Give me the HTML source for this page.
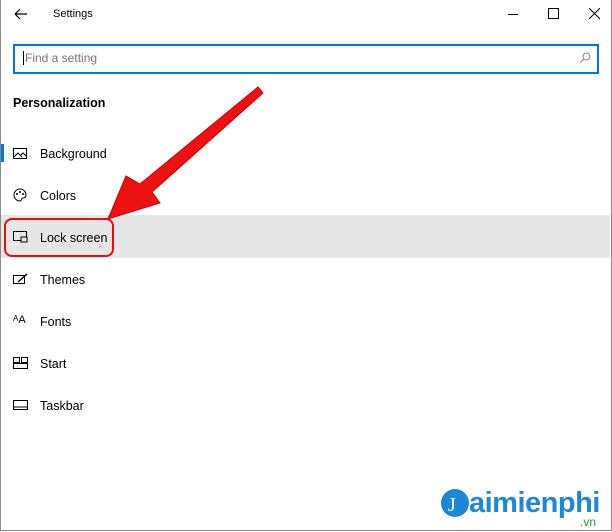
<!DOCTYPE html>
<html><head><style>
body{margin:0;width:612px;height:532px;background:#fff;font-family:"Liberation Sans",sans-serif;position:relative;overflow:hidden}
.frame{position:absolute;left:0;top:0;width:610px;height:530px;border:1px solid #8a8a8a;border-top:none}
.t{position:absolute;font-size:12px;color:#000}
.item{position:absolute;left:40px;font-size:12.5px;color:#000}
.ic{position:absolute;left:13px}
</style></head><body>
<div class="frame"></div>
<svg style="position:absolute;left:14px;top:8px" width="14" height="12"><path d="M1 6H13M1 6L6 1M1 6L6 11" stroke="#000" stroke-width="1.2" fill="none"/></svg>
<div class="t" style="left:53px;top:8px;font-size:11px">Settings</div>
<div style="position:absolute;left:508px;top:14px;width:10px;height:1px;background:#000"></div>
<div style="position:absolute;left:548px;top:8px;width:9px;height:9px;border:1px solid #000"></div>
<svg style="position:absolute;left:589px;top:8px" width="11" height="11"><path d="M0 0L11 11M11 0L0 11" stroke="#000" stroke-width="1"/></svg>
<div style="position:absolute;left:13px;top:44px;width:582px;height:26px;border:2px solid #0078d7"></div>
<div style="position:absolute;left:23px;top:51px;width:1px;height:14px;background:#000"></div>
<div class="t" style="left:25px;top:51px;color:#777;font-size:12px">Find a setting</div>
<svg style="position:absolute;left:579px;top:52px" width="12" height="12"><circle cx="7.5" cy="4.5" r="3.5" stroke="#888" fill="none"/><path d="M5 7L1 11" stroke="#888"/></svg>
<div class="t" style="left:13px;top:96px;font-weight:bold;font-size:12.5px">Personalization</div>
<div style="position:absolute;left:1px;top:144px;width:3px;height:18px;background:#0078d7"></div>
<div style="position:absolute;left:1px;top:215px;width:609px;height:43px;background:#e6e6e6"></div>
<svg class="ic" style="top:148px" width="14" height="12"><rect x=".5" y=".5" width="13" height="10" fill="none" stroke="#000"/><path d="M1 9L5 5L9 9M8 7L10 5L13 8" stroke="#000" fill="none"/></svg>
<div class="item" style="top:147px">Background</div>
<svg class="ic" style="top:188px" width="14" height="14"><path d="M7 1A6 6 0 1 0 7 13C9 13 8 10 10 10C12 10 13 9 13 7A6 6 0 0 0 7 1Z" fill="none" stroke="#000"/><circle cx="4" cy="6" r="1" fill="#000"/><circle cx="7" cy="4" r="1" fill="#000"/><circle cx="10" cy="6" r="1" fill="#000"/></svg>
<div class="item" style="top:189px">Colors</div>
<svg class="ic" style="top:231px" width="15" height="12"><rect x=".5" y=".5" width="13" height="9" fill="none" stroke="#000"/><rect x="8" y="6" width="6" height="5" fill="#e6e6e6" stroke="#000"/></svg>
<div class="item" style="top:231px">Lock screen</div>
<svg class="ic" style="top:273px" width="15" height="13"><rect x=".5" y="2.5" width="11" height="8" fill="none" stroke="#000"/><path d="M5 9L14 1" stroke="#000" stroke-width="1.5"/></svg>
<div class="item" style="top:273px">Themes</div>
<div class="ic" style="top:314px;font-size:11px"><span style="font-size:8px;vertical-align:top">A</span>A</div>
<div class="item" style="top:315px">Fonts</div>
<svg class="ic" style="top:357px" width="15" height="12"><rect x=".5" y=".5" width="6" height="5" fill="none" stroke="#000"/><rect x="8.5" y=".5" width="6" height="5" fill="none" stroke="#000"/><rect x=".5" y="6.5" width="14" height="5" fill="none" stroke="#000"/></svg>
<div class="item" style="top:357px">Start</div>
<svg class="ic" style="top:400px" width="15" height="10"><rect x=".5" y=".5" width="14" height="9" fill="none" stroke="#000"/><path d="M1 7H14" stroke="#000"/></svg>
<div class="item" style="top:399px">Taskbar</div>
<div style="position:absolute;left:4px;top:218px;width:106px;height:35px;border:2.5px solid #e0101a;border-radius:8px"></div>
<svg style="position:absolute;left:0;top:0" width="612" height="532"><path d="M258 87L263 93L152 192L160 203L108 219L126 176L140 184Z" fill="#ee1111" stroke="#c00" stroke-width="1"/></svg>
<svg style="position:absolute;left:440px;top:488px" width="30" height="30"><circle cx="15" cy="15" r="14" fill="#1e88d8"/><text x="8" y="23" font-size="20" fill="#fff" font-family="Liberation Serif">J</text></svg>
<div style="position:absolute;left:469px;top:487px;font-size:29px;color:#1e88d8;font-weight:bold;letter-spacing:-0.5px;font-family:'Liberation Sans',sans-serif">aimienphi</div>
<div style="position:absolute;left:580px;top:515px;font-size:12px;color:#2a9a2a">.vn</div>
</body></html>
